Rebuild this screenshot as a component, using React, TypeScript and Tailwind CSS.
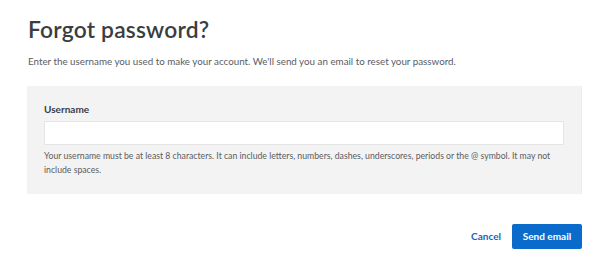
import React from "react";

export default function App() {
  return (
    <div className="w-[600px] h-[278px] bg-white font-['Lato',sans-serif] pl-[28px] pr-[18px] pt-[14px]">
      <h1 className="text-[22.8px] leading-[30px] font-semibold text-[#3a3d42] tracking-[0.2px]">Forgot password?</h1>
      <p className="mt-[10px] text-[9.8px] leading-[14px] text-[#5a5d62]">
        Enter the username you used to make your account. We'll send you an email to reset your password.
      </p>
      <div className="mt-[18px] -ml-[1px] bg-[#f3f3f3] border-r border-[#ececec] pl-[17px] pr-[17px] pt-[16px] pb-[17px]">
        <label className="block text-[10px] leading-[14px] font-bold text-[#3a3d4a]">Username</label>
        <input className="mt-[5px] block w-full h-[24px] bg-white border border-[#e6e6e6] outline-none" />
        <p className="mt-[4px] text-[8.7px] leading-[14px] text-[#5a5d62]">
          Your username must be at least 8 characters. It can include letters, numbers, dashes, underscores, periods or the @ symbol. It may not include spaces.
        </p>
      </div>
      <div className="mt-[30px] flex justify-end items-center gap-[11px]">
        <button className="text-[10px] font-bold text-[#1b63b8]">Cancel</button>
        <button className="w-[70px] h-[25px] rounded-[2px] bg-[#0b6bcb] text-white text-[10px] font-bold">Send email</button>
      </div>
    </div>
  );
}
